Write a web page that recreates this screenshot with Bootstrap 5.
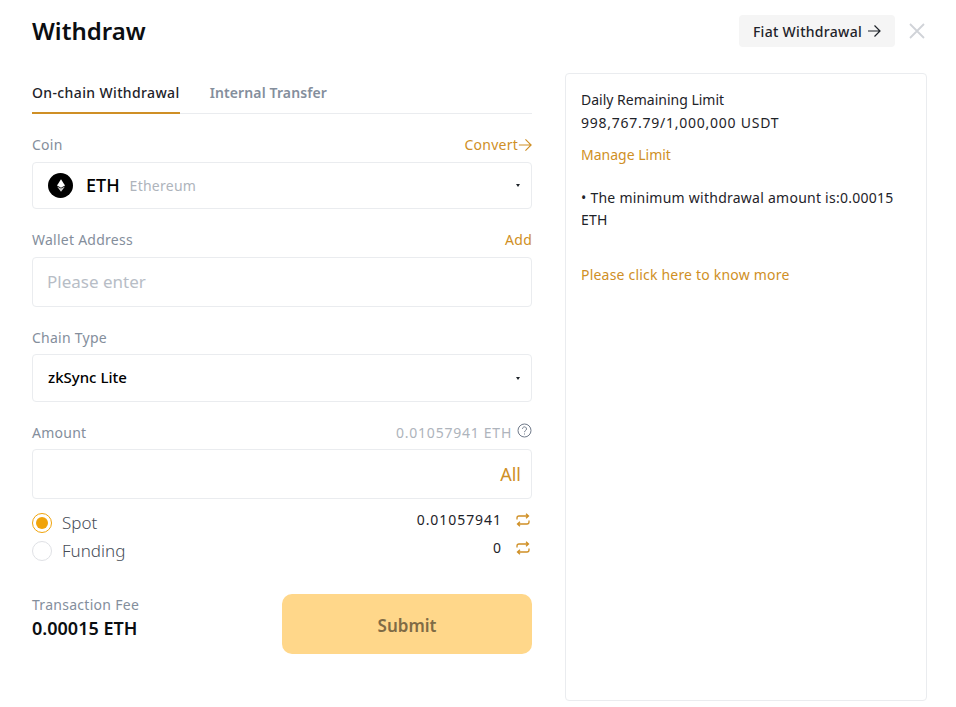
<!DOCTYPE html>
<html lang="en">
<head>
<meta charset="utf-8">
<title>Withdraw</title>
<link rel="stylesheet" href="https://cdn.jsdelivr.net/npm/bootstrap@5.3.0/dist/css/bootstrap.min.css">
<style>
html,body{height:100%;}
body{font-family:"Noto Sans","Liberation Sans",sans-serif;font-size:14px;color:#1e2329;background:#fff;overflow:hidden;}
.shell{width:956px;height:707px;padding:15px 29px 6px 32px;}
.head-row{height:32px;margin-bottom:26px;}
.page-title{font-size:24px;font-weight:600;color:#0b0e11;margin:0;line-height:32px;}
.fiat-btn{height:32px;width:156px;background:#f5f5f5;border:0;border-radius:4px;color:#1e2329;font-size:14px;font-weight:500;padding:0 0 0 1px;letter-spacing:.3px;}
.close-x{margin-left:14px;margin-right:2px;width:16px;height:16px;}
.main-col{width:500px;}
.side-col{width:362px;height:628px;border:1px solid #eaecef;border-radius:4px;padding:14px 15px;line-height:23px;}
.tabs-row{height:41px;border-bottom:1px solid #eaecef;}
.tab-item{height:41px;line-height:40px;font-size:14px;font-weight:500;margin-right:30px;color:#848e9c;}
.tab-on{color:#1e2329;border-bottom:2px solid #cf8f25;letter-spacing:.37px;}
.tab-off{font-weight:600;color:#848e9c;letter-spacing:.12px;}
.lab-row{height:20px;line-height:20px;color:#848e9c;font-size:14px;letter-spacing:.25px;}
.sec-coin{margin-top:21px;}
.amber{color:#cf8f25;text-decoration:none;}
.box{border:1px solid #eaecef;border-radius:4px;background:#fff;}
.box-sel{height:47px;padding:0 15px;}
.box-tall{height:48px;}
.box-in{height:50px;padding:0 14px;font-size:17px;}
.ph{color:#b7bdc6;}
.caret-mini{width:0;height:0;border-left:2.5px solid transparent;border-right:2.5px solid transparent;border-top:3px solid #1e2329;margin-right:-4px;}
.coin-dot{width:25px;height:25px;border-radius:50%;background:#000;margin-right:13px;}
.coin-sym{font-size:18px;font-weight:500;color:#000;margin-right:10px;}
.coin-nm{color:#aeb4bc;font-size:14px;letter-spacing:.25px;}
.chain-nm{font-weight:500;color:#000;font-size:15px;padding-bottom:2px;}
.gap-coin{margin-top:7px;}
.sec-wallet{margin-top:21px;}
.sec-chain{margin-top:21px;}
.sec-amt{margin-top:21px;}
.gap-wallet{margin-top:7px;}
.gap-chain{margin-top:6px;}
.gap-amt{margin-top:6px;}
.help-ic{margin-left:5px;margin-top:-5px;}
.bal-num{color:#aeb4bc;letter-spacing:.75px;}
.all-txt{font-size:18px;margin-right:-4px;}
.radio-row{height:28px;font-size:17px;font-weight:300;color:#474d57;}
.radio-list{margin-top:10px;}
.rad{width:20px;height:20px;border-radius:50%;border:1px solid #dfe1e5;margin-right:10px;flex:none;}
.rad-on{border-color:#f0a30a;}
.rad-on::before{content:"";width:12px;height:12px;border-radius:50%;background:#f0a30a;}
.bal-val{font-size:14px;color:#1e2329;font-weight:400;margin-right:14px;letter-spacing:.95px;margin-top:-7px;}
.swap-ic{margin-right:2px;margin-top:-7px;}
.foot-row{margin-top:29px;}
.fee-col{padding-top:1px;}
.fee-lab{font-size:14px;color:#848e9c;line-height:20px;letter-spacing:.28px;}
.fee-val{font-size:18px;font-weight:600;color:#0b0e11;line-height:24px;margin-top:1px;}
.go-btn{width:250px;height:60px;border:0;border-radius:10px;background:#ffd78a;color:#806b45;font-size:17px;font-weight:600;padding:3px 0 0;}
.side-val{font-size:14px;color:#1e2329;letter-spacing:.75px;}
.side-link{margin-top:9px;}
.side-note{margin-top:21px;line-height:22px;letter-spacing:.25px;}
.side-more{margin-top:32px;letter-spacing:.2px;}
</style>
</head>
<body>
<div class="shell d-flex flex-column">
  <div class="head-row d-flex align-items-center justify-content-between">
    <h1 class="page-title">Withdraw</h1>
    <div class="d-flex align-items-center">
      <button class="fiat-btn d-flex align-items-center justify-content-center" type="button">Fiat Withdrawal
        <svg class="ms-1" width="16" height="16" viewBox="0 0 16 16" fill="none" stroke="#1e2329" stroke-width="1.2"><path d="M2 8h12M8.500 2.500 14 8l-5.500 5.500"/></svg>
      </button>
      <svg class="close-x" viewBox="0 0 16 16" fill="none" stroke="#d0d3d8" stroke-width="1.8"><path d="M1 1l14 14M15 1 1 15"/></svg>
    </div>
  </div>
  <div class="d-flex justify-content-between">
    <div class="main-col">
      <div class="tabs-row d-flex">
        <div class="tab-item tab-on">On-chain Withdrawal</div>
        <div class="tab-item tab-off">Internal Transfer</div>
      </div>
      <div class="lab-row d-flex justify-content-between sec-coin">
        <span>Coin</span>
        <a class="amber d-flex align-items-center" href="#">Convert<svg width="14" height="14" viewBox="0 0 16 16" fill="none" stroke="#cf8f25" stroke-width="1.3"><path d="M1 8h14M8.500 1.500 15 8l-6.500 6.500"/></svg></a>
      </div>
      <div class="box box-sel gap-coin d-flex align-items-center">
        <span class="coin-dot d-flex align-items-center justify-content-center">
          <svg width="8" height="13" viewBox="0 0 9 14"><path fill="#fff" d="M4.500 0 9 7 4.500 9.500 0 7z"/><path fill="#ccc" d="M4.500 10.500 9 8 4.500 14 0 8z"/></svg>
        </span>
        <span class="coin-sym">ETH</span>
        <span class="coin-nm">Ethereum</span>
        <span class="caret-mini ms-auto"></span>
      </div>
      <div class="lab-row d-flex justify-content-between sec-wallet">
        <span>Wallet Address</span><a class="amber" href="#">Add</a>
      </div>
      <div class="box box-in gap-wallet d-flex align-items-center"><span class="ph">Please enter</span></div>
      <div class="lab-row sec-chain">Chain Type</div>
      <div class="box box-sel box-tall gap-chain d-flex align-items-center">
        <span class="chain-nm">zkSync Lite</span>
        <span class="caret-mini ms-auto"></span>
      </div>
      <div class="lab-row d-flex justify-content-between sec-amt">
        <span>Amount</span>
        <span class="d-flex align-items-center"><span class="bal-num">0.01057941 ETH</span>
          <svg class="help-ic" width="15" height="15" viewBox="0 0 15 15" fill="none" stroke="#707a8a"><circle cx="7.500" cy="7.500" r="6.500"/><path d="M5.500 5.800a2 2 0 1 1 3 1.800c-.7.4-1 .8-1 1.600"/><path d="M7.500 10.500v1"/></svg>
        </span>
      </div>
      <div class="box box-in gap-amt d-flex align-items-center justify-content-end"><a class="amber all-txt" href="#">All</a></div>
      <div class="radio-list">
        <div class="radio-row d-flex align-items-center">
          <span class="rad rad-on d-flex align-items-center justify-content-center"></span>
          <span>Spot</span>
          <span class="bal-val ms-auto">0.01057941</span>
          <svg class="swap-ic" width="14" height="14" viewBox="0 0 14 14" fill="none" stroke="#cf8f25" stroke-width="1.300"><path d="M1 6.500V5a2 2 0 0 1 2-2h9.500M10 .8 12.500 3 10 5.200"/><path d="M13 7.500V9a2 2 0 0 1-2 2H1.500M4 8.800 1.500 11 4 13.200"/></svg>
        </div>
        <div class="radio-row d-flex align-items-center">
          <span class="rad d-flex"></span>
          <span>Funding</span>
          <span class="bal-val ms-auto">0</span>
          <svg class="swap-ic" width="14" height="14" viewBox="0 0 14 14" fill="none" stroke="#cf8f25" stroke-width="1.300"><path d="M1 6.500V5a2 2 0 0 1 2-2h9.500M10 .8 12.500 3 10 5.200"/><path d="M13 7.500V9a2 2 0 0 1-2 2H1.500M4 8.800 1.500 11 4 13.200"/></svg>
        </div>
      </div>
      <div class="foot-row d-flex justify-content-between align-items-start">
        <div class="fee-col">
          <div class="fee-lab">Transaction Fee</div>
          <div class="fee-val">0.00015 ETH</div>
        </div>
        <button class="go-btn" type="button">Submit</button>
      </div>
    </div>
    <aside class="side-col">
      <div>Daily Remaining Limit</div>
      <div class="side-val">998,767.79/1,000,000 USDT</div>
      <div class="side-link"><a class="amber" href="#">Manage Limit</a></div>
      <div class="side-note">• The minimum withdrawal amount is:0.00015 ETH</div>
      <div class="side-more"><a class="amber" href="#">Please click here to know more</a></div>
    </aside>
  </div>
</div>
<script src="https://cdn.jsdelivr.net/npm/bootstrap@5.3.0/dist/js/bootstrap.bundle.min.js"></script>
</body>
</html>
